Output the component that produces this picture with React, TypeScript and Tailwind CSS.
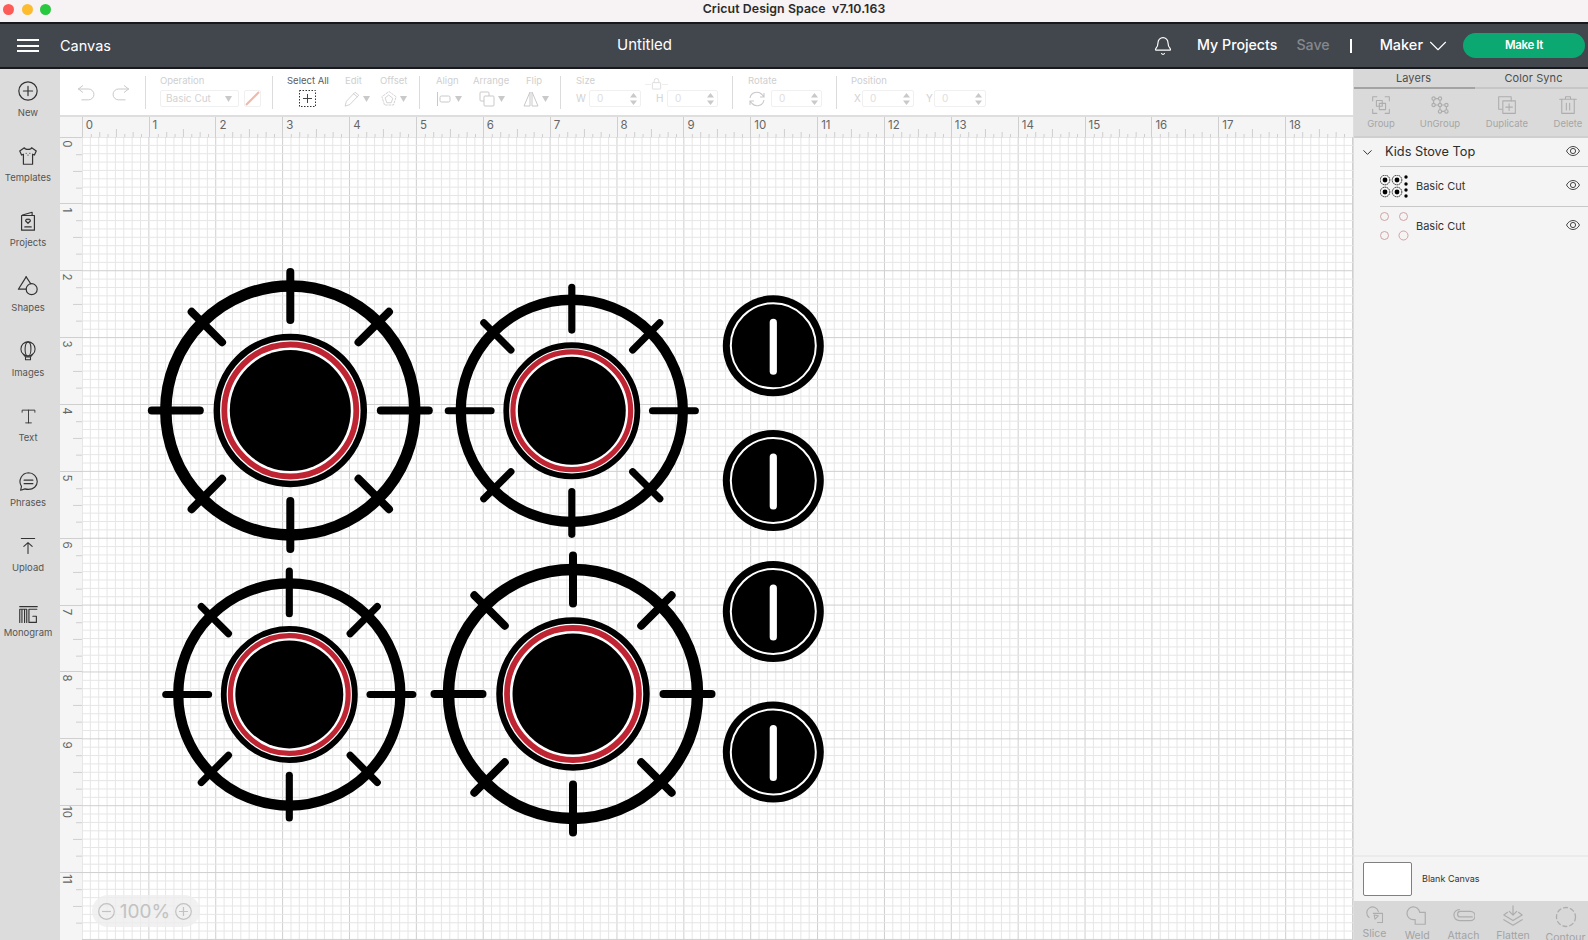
import React from "react";
import { Bell, ChevronDown } from "lucide-react";

const INCH = 66.87;
const GRID_X = 81.7;
const GRID_Y = 136.5;

function Ic({ children, size = 22, sw = 1.3 }: { children: React.ReactNode; size?: number; sw?: number }) {
  return (
    <svg
      width={size}
      height={size}
      viewBox="0 0 24 24"
      fill="none"
      stroke="currentColor"
      strokeWidth={sw}
      strokeLinecap="round"
      strokeLinejoin="round">
      {children}
    </svg>
  );
}

function Caret() {
  return (
    <svg width="7" height="6" viewBox="0 0 7 6">
      <path d="M0 0h7L3.5 6z" fill="#c9c9c9" />
    </svg>
  );
}

function Burner({ x, y, s }: { x: number; y: number; s: number }) {
  const diag = [45, 135, 225, 315];
  const straight = [0, 90, 180, 270];
  return (
    <g transform={`translate(${x} ${y}) scale(${s})`}>
      <circle r="124.5" fill="none" stroke="#000" strokeWidth="11.5" />
      {straight.map((a) => (
        <line key={a} x1="90.5" x2="138.5" transform={`rotate(${a})`} stroke="#000" strokeWidth="8" strokeLinecap="round" />
      ))}
      {diag.map((a) => (
        <line key={a} x1="96.5" x2="139.5" transform={`rotate(${a})`} stroke="#000" strokeWidth="8" strokeLinecap="round" />
      ))}
      <circle r="71" fill="#fff" />
      <circle r="73.5" fill="none" stroke="#000" strokeWidth="6.5" />
      <circle r="66" fill="none" stroke="#bf2433" strokeWidth="5.8" />
      <circle r="60.5" fill="#000" />
    </g>
  );
}

function Knob({ x, y }: { x: number; y: number }) {
  return (
    <g transform={`translate(${x} ${y})`}>
      <circle r="50.5" fill="#000" />
      <circle r="42.5" fill="none" stroke="#fff" strokeWidth="2" />
      <rect x="-3.6" y="-27" width="7.2" height="56" rx="3.6" fill="#fff" />
    </g>
  );
}

function CanvasArt() {
  const vertical = Array.from({ length: 153 }, (_, i) => i);
  const horizontal = Array.from({ length: 97 }, (_, i) => i);
  return (
    <svg width="1271.3" height="803.5" viewBox={`${GRID_X} ${GRID_Y} 1271.3 803.5`} className="block">
      {vertical.map((i) => (
        <line
          key={i}
          x1={GRID_X + (i * INCH) / 8}
          x2={GRID_X + (i * INCH) / 8}
          y1={GRID_Y}
          y2={940}
          stroke={i % 8 === 0 ? "#cfcfcf" : "#e6e6e6"}
          strokeWidth="1"
        />
      ))}
      {horizontal.map((i) => (
        <line
          key={i}
          x1={GRID_X}
          x2={1353}
          y1={GRID_Y + (i * INCH) / 8}
          y2={GRID_Y + (i * INCH) / 8}
          stroke={i % 8 === 0 ? "#cfcfcf" : "#e6e6e6"}
          strokeWidth="1"
        />
      ))}
      <Burner x={290} y={410} s={1} />
      <Burner x={571.5} y={410.3} s={0.892} />
      <Burner x={289} y={694} s={0.892} />
      <Burner x={572.7} y={693.5} s={1} />
      <Knob x={773} y={345.3} />
      <Knob x={773} y={480} />
      <Knob x={773} y={611} />
      <Knob x={773} y={751.5} />
    </svg>
  );
}

function TopRuler() {
  const ticks = [1, 2, 3, 4, 5, 6, 7];
  return (
    <div className="flex h-[19.5px] overflow-hidden bg-[#f5f5f5]">
      <div className="w-[21.7px] shrink-0" />
      {Array.from({ length: 19 }, (_, n) => (
        <div key={n} className="relative w-[66.87px] shrink-0 border-l border-[#cfcfcf]">
          <span className="absolute left-[3px] top-[1px] text-[11.5px] leading-[14px] text-[#666]">{n}</span>
          <svg width="67" height="8" className="absolute bottom-0 left-0">
            {ticks.map((t) => (
              <line
                key={t}
                x1={(t * INCH) / 8}
                x2={(t * INCH) / 8}
                y1={t === 4 ? 0 : t % 2 === 0 ? 3 : 5}
                y2="8"
                stroke="#cfcfcf"
              />
            ))}
          </svg>
        </div>
      ))}
    </div>
  );
}

function LeftRuler() {
  const ticks = [1, 2, 3];
  return (
    <div className="w-[21.7px] shrink-0 bg-[#f5f5f5]">
      {Array.from({ length: 12 }, (_, n) => (
        <div key={n} className="relative h-[66.87px] border-t border-[#cfcfcf]">
          <span className="absolute left-[1px] top-0 w-[12px] rotate-90 text-center text-[11.5px] leading-[12px] text-[#666]">
            {n}
          </span>
          <svg width="22" height="67" className="absolute left-0 top-0">
            {ticks.map((t) => (
              <line key={t} x1={t === 2 ? 13 : 16} x2="22" y1={(t * INCH) / 4} y2={(t * INCH) / 4} stroke="#cfcfcf" />
            ))}
          </svg>
        </div>
      ))}
    </div>
  );
}

function Sep() {
  return <div className="mt-[7px] h-[33px] w-px shrink-0 bg-[#dcdcdc]" />;
}

function Tool({
  label,
  className,
  labelClass,
  children
}: {
  label: string;
  className: string;
  labelClass?: string;
  children: React.ReactNode;
}) {
  return (
    <div className={`shrink-0 ${className}`}>
      <div className={`h-[20px] pt-[6px] text-[9.5px] leading-[12px] ${labelClass ?? "text-[#cfcfcf]"}`}>{label}</div>
      <div className="flex h-[19px] items-center">{children}</div>
    </div>
  );
}

function NumInput({ className }: { className: string }) {
  return (
    <div className={`flex h-[17px] items-center justify-between rounded-[2px] border border-[#f0f0f0] pl-[7px] pr-[3px] ${className}`}>
      <span className="text-[10px] text-[#dedede]">0</span>
      <svg width="7" height="12" viewBox="0 0 7 12">
        <path d="M3.5 0 7 4.5H0zM3.5 12 0 7.5h7z" fill="#c9c9c9" />
      </svg>
    </div>
  );
}

function Toolbar() {
  return (
    <div className="flex h-[48px] border-b-2 border-[#dedede] bg-white text-[#c9c9c9]">
      <div className="flex w-[85px] shrink-0 items-center gap-[15px] pl-[16px] pt-[4px]">
        <Ic size={20} sw={1.2}>
          <path d="M3 6l5-4M3 6l5 4M3 6h12a6 6 0 0 1 0 13H7" />
        </Ic>
        <Ic size={20} sw={1.2}>
          <path d="M21 6l-5-4M21 6l-5 4M21 6H9a6 6 0 0 0 0 13h8" />
        </Ic>
      </div>
      <Sep />
      <Tool label="Operation" className="w-[126px] pl-[14px]">
        <div className="flex h-[17px] w-[79px] items-center justify-between rounded-[2px] border border-[#f0f0f0] pl-[5px] pr-[6px]">
          <span className="text-[10px] text-[#d2d2d2]">Basic Cut</span>
          <Caret />
        </div>
        <div className="ml-[5px] flex h-[17px] w-[17px] items-center justify-center rounded-[2px] border border-[#f0f0f0]">
          <svg width="15" height="15" viewBox="0 0 15 15">
            <line x1="1" y1="14" x2="14" y2="1" stroke="#f0b8a8" strokeWidth="2" />
          </svg>
        </div>
      </Tool>
      <Sep />
      <Tool label="Select All" labelClass="text-[#5c5c5c]" className="w-[70px] pl-[14px]">
        <svg width="17" height="17" viewBox="0 0 17 17" fill="none" stroke="#333" className="ml-[12px]">
          <rect x="0.5" y="0.5" width="16" height="16" strokeDasharray="1.5 1.5" />
          <path d="M8.500 4v9M4 8.500h9" stroke="#444" />
        </svg>
      </Tool>
      <Tool label="Edit" className="w-[37px] pl-[2px]">
        <div className="-ml-[2px] flex items-center gap-[2px]">
          <Ic size={18} sw={1.1}>
            <path d="M3 21l1.5-6L16 3l5 4-11.5 12zM14 5l5 4" />
          </Ic>
          <Caret />
        </div>
      </Tool>
      <Tool label="Offset" className="w-[39px]">
        <div className="flex items-center gap-[2px]">
          <Ic size={18} sw={1.1}>
            <path d="M12 7l5 4-2 6H9l-2-6z" />
            <path d="M12 2l9.5 7-3.5 11H6L2.5 9z" strokeDasharray="2.5 2" />
          </Ic>
          <Caret />
        </div>
      </Tool>
      <Sep />
      <Tool label="Align" className="w-[53px] pl-[16px]">
        <div className="flex items-center gap-[3px]">
          <svg width="16" height="16" viewBox="0 0 16 16" fill="none" stroke="currentColor">
            <path d="M1.5 1v14" />
            <rect x="4" y="5" width="10" height="6" rx="1.5" />
          </svg>
          <Caret />
        </div>
      </Tool>
      <Tool label="Arrange" className="w-[50px]">
        <div className="ml-[6px] flex items-center gap-[3px]">
          <svg width="16" height="16" viewBox="0 0 16 16" fill="none" stroke="currentColor">
            <rect x="1" y="1" width="9" height="9" rx="1" />
            <rect x="5" y="5" width="10" height="10" rx="1" fill="#fff" />
          </svg>
          <Caret />
        </div>
      </Tool>
      <Tool label="Flip" className="w-[37px] pl-[3px]">
        <div className="-ml-[3px] flex items-center gap-[3px]">
          <svg width="16" height="18" viewBox="0 0 16 18" fill="none" stroke="currentColor">
            <path d="M7 2 1 16h6zM9 2l6 14H9z" />
          </svg>
          <Caret />
        </div>
      </Tool>
      <Sep />
      <Tool label="Size" className="relative w-[171px] pl-[15px]">
        <span className="absolute left-[84px] top-[9px] flex items-center">
          <span className="h-px w-[6px] bg-[#eeeeee]" />
          <svg width="11" height="12" viewBox="0 0 12 13" fill="none" stroke="#dcdcdc">
            <rect x="1.5" y="5" width="9" height="7" rx="0.5" />
            <path d="M3.5 5V3a2.5 2.5 0 0 1 5 0v2" />
          </svg>
          <span className="h-px w-[6px] bg-[#eeeeee]" />
        </span>
        <span className="w-[13px] text-[10px] text-[#d2d2d2]">W</span>
        <NumInput className="w-[52px]" />
        <span className="ml-[15px] w-[11px] text-[10px] text-[#d2d2d2]">H</span>
        <NumInput className="w-[51px]" />
      </Tool>
      <Sep />
      <Tool label="Rotate" className="w-[103px] pl-[15px]">
        <svg width="18" height="18" viewBox="0 0 18 18" fill="none" stroke="currentColor" strokeWidth="1.1">
          <path d="M2 8a7 7 0 0 1 12-3.5L16 7M16 3v4h-4M16 10a7 7 0 0 1-12 3.5L2 11M2 15v-4h4" />
        </svg>
        <NumInput className="ml-[5px] w-[51px]" />
      </Tool>
      <Sep />
      <Tool label="Position" className="pl-[14px]">
        <span className="w-[11px] pl-[3px] text-[10px] text-[#d2d2d2]">X</span>
        <NumInput className="w-[52px]" />
        <span className="ml-[12px] w-[8px] text-[10px] text-[#d2d2d2]">Y</span>
        <NumInput className="w-[52px]" />
      </Tool>
    </div>
  );
}

const sideItems: { label: string; icon: React.ReactNode }[] = [
  {
    label: "New",
    icon: (
      <Ic>
        <circle cx="12" cy="12" r="10" />
        <path d="M12 7v10M7 12h10" />
      </Ic>
    )
  },
  {
    label: "Templates",
    icon: (
      <Ic>
        <path d="M8 3 3 6.500 5 11 7 10v11h10V10l2 1 2-4.500L16 3c-.8 2.500-7.200 2.500-8 0z" />
        <path d="M10 9h.01M14 9h.01M12 11h.01" />
      </Ic>
    )
  },
  {
    label: "Projects",
    icon: (
      <Ic>
        <path d="M6 6v-.5L16.500 2.500V6M5 6h14v16H5z" />
        <path d="M12 14.500 9.500 12a1.500 1.500 0 0 1 2.500-1.500A1.500 1.500 0 0 1 14.500 12zM8.500 18.500h7" />
      </Ic>
    )
  },
  {
    label: "Shapes",
    icon: (
      <Ic>
        <path d="M10 2 1.500 15.500H10" />
        <path d="M10 2l5 7.500" />
        <circle cx="16" cy="15.500" r="6" />
      </Ic>
    )
  },
  {
    label: "Images",
    icon: (
      <Ic size={20}>
        <circle cx="12" cy="9.500" r="8.500" />
        <ellipse cx="12" cy="9.500" rx="3.500" ry="8.500" />
        <path d="M6.500 16 9 19h6l2.500-3M9 19v3.500h6V19" />
      </Ic>
    )
  },
  {
    label: "Text",
    icon: (
      <Ic size={17}>
        <path d="M3 6V3h18v3M12 3v18M8 21h8" />
      </Ic>
    )
  },
  {
    label: "Phrases",
    icon: (
      <Ic size={21}>
        <path d="M12 2a10 10 0 0 1 10 10c0 5.500-4.500 9-10 9-1.500 0-2.500 0-4-.6L3 22l1-4.500A10 10 0 0 1 12 2z" />
        <path d="M7 10.500h10M7 14.500h10" />
      </Ic>
    )
  },
  {
    label: "Upload",
    icon: (
      <Ic size={20}>
        <path d="M4 3h16M12 21V8M7 12.500 12 8l5 4.500" />
      </Ic>
    )
  },
  {
    label: "Monogram",
    icon: (
      <div className="translate-y-[3px]">
        <Ic size={21}>
          <path d="M2 3h20M2 21V6h8v15M4.500 6v15M7.500 6v15M12.500 6v15H21v-7h-4M13 6h8.500" />
        </Ic>
      </div>
    )
  }
];

function Sidebar() {
  return (
    <div className="w-[60px] shrink-0 bg-[#dcdcdc] pr-[4px] pt-[11px]">
      {sideItems.map((it) => (
        <div key={it.label} className="flex h-[65px] flex-col items-center text-[#333]">
          <div className="flex h-[22px] items-center justify-center">{it.icon}</div>
          <div className="mt-[5px] text-[9.5px] leading-[12px] text-[#555]">{it.label}</div>
        </div>
      ))}
    </div>
  );
}

function EyeMark() {
  return (
    <svg width="14" height="10" viewBox="0 0 14 10" fill="none" stroke="#333" strokeWidth="0.9" className="mb-[3px] mr-[8px]">
      <path d="M0.500 5C2 2 4.500 0.500 7 0.500S12 2 13.500 5C12 8 9.500 9.500 7 9.500S2 8 0.500 5z" />
      <circle cx="7" cy="5" r="2.600" />
    </svg>
  );
}

function Thumb() {
  const rings = [
    [5, 5],
    [17, 5],
    [5, 17],
    [17, 17]
  ];
  const dots = [2, 9, 15, 21];
  return (
    <svg width="29" height="24" viewBox="0 0 29 24">
      {rings.map(([x, y]) => (
        <g key={`${x}-${y}`}>
          <circle cx={x} cy={y} r="4.800" fill="none" stroke="#000" strokeWidth="0.8" strokeDasharray="1.500 0.500" />
          <circle cx={x} cy={y} r="2.400" fill="#000" />
        </g>
      ))}
      {dots.map((y) => (
        <circle key={y} cx="26" cy={y} r="1.700" fill="#000" />
      ))}
    </svg>
  );
}

function RedDots() {
  return (
    <svg width="29" height="29" viewBox="0 0 29 29" fill="none" stroke="#c98f8f" strokeWidth="0.8">
      <circle cx="4.500" cy="4.500" r="4" />
      <circle cx="23.500" cy="4.500" r="4" />
      <circle cx="4.500" cy="23.500" r="4" />
      <circle cx="23.500" cy="23.500" r="4.500" />
    </svg>
  );
}

const panelTools: { label: string; w: string; icon: React.ReactNode }[] = [
  {
    label: "Group",
    w: "w-[54px]",
    icon: (
      <Ic size={20}>
        <path d="M2 7V2h5M17 2h5v5M2 17v5h5M22 17v5h-5" />
        <rect x="6.500" y="6.500" width="7" height="7" />
        <rect x="10" y="10" width="7.500" height="7.500" />
      </Ic>
    )
  },
  {
    label: "UnGroup",
    w: "w-[64px]",
    icon: (
      <Ic size={22}>
        <path d="M5 5h7v7H5zM12 12h7v7h-7z" />
        <circle cx="5" cy="5" r="1.800" fill="#dadada" />
        <circle cx="12" cy="5" r="1.800" fill="#dadada" />
        <circle cx="5" cy="12" r="1.800" fill="#dadada" />
        <circle cx="12" cy="12" r="1.800" fill="#dadada" />
        <circle cx="19" cy="12" r="1.800" fill="#dadada" />
        <circle cx="12" cy="19" r="1.800" fill="#dadada" />
        <circle cx="19" cy="19" r="1.800" fill="#dadada" />
      </Ic>
    )
  },
  {
    label: "Duplicate",
    w: "w-[70px]",
    icon: (
      <Ic size={20}>
        <path d="M6 17H2V2h15v5" />
        <rect x="7" y="7" width="15" height="15" />
        <path d="M14.500 10.500v8M10.500 14.500h8" />
      </Ic>
    )
  },
  {
    label: "Delete",
    w: "w-[52px]",
    icon: (
      <Ic size={20}>
        <path d="M2 5h20M9 5V2h6v3M4.500 5v17h15V5M10 10v8M14 10v8" />
      </Ic>
    )
  }
];

const bottomTools: { label: string; w: string; icon: React.ReactNode }[] = [
  {
    label: "Slice",
    w: "w-[41px]",
    icon: (
      <Ic size={20}>
        <path d="M5 15a7 7 0 1 1 11-7" />
        <path d="M10 10h11v11h-6" />
        <path d="M11 12l5 1-4 4z" />
      </Ic>
    )
  },
  {
    label: "Weld",
    w: "w-[44.500px]",
    icon: (
      <Ic size={22}>
        <path d="M10 16H8A7 7 0 1 1 15 8h6v13H10z" />
      </Ic>
    )
  },
  {
    label: "Attach",
    w: "w-[48px]",
    icon: (
      <Ic size={22}>
        <path d="M21 13H8a3 3 0 0 1 0-6h11a4.500 4.500 0 0 1 0 10H7a6 6 0 0 1 0-12" />
      </Ic>
    )
  },
  {
    label: "Flatten",
    w: "w-[51px]",
    icon: (
      <Ic size={22}>
        <path d="M12 1v9M8 7l4 4 4-4M6 8 2 11l10 6 10-6-4-3M2 16l10 6 10-6" />
      </Ic>
    )
  },
  {
    label: "Contour",
    w: "w-[54px]",
    icon: (
      <Ic size={24}>
        <circle cx="12" cy="12" r="9.500" strokeDasharray="4 3" />
      </Ic>
    )
  }
];

function Panel() {
  return (
    <div className="flex w-[235px] shrink-0 flex-col border-l border-[#dedede] bg-[#f4f4f4]">
      <div className="flex h-[20px] bg-[#d8d8d8] text-[11px] leading-[18px] tracking-[0.1px] text-[#4d4d4d]">
        <div className="w-[121px] border-b-2 border-[#a3a3a3] pr-[2px] text-center">Layers</div>
        <div className="flex-1 border-b-2 border-[#c6c6c6] pl-[4px] text-center">Color Sync</div>
      </div>
      <div className="flex h-[49px] border-b-2 border-[#cfcfcf] bg-[#dadada] text-[#adadad]">
        {panelTools.map((t) => (
          <div key={t.label} className={`flex shrink-0 flex-col items-center pt-[5px] ${t.w}`}>
            <div className="flex h-[22px] items-center">{t.icon}</div>
            <div className="mt-[2px] text-[9.5px] leading-[12px] text-[#a6a6a6]">{t.label}</div>
          </div>
        ))}
      </div>
      <div className="flex-1">
        <div className="flex h-[28px] items-center">
          <ChevronDown size={15} strokeWidth={1.5} className="ml-[6px] text-[#222]" />
          <span className="ml-[10px] flex-1 text-[12.75px] text-[#2c2c2c]">Kids Stove Top</span>
          <EyeMark />
        </div>
        <div className="ml-[26px] flex h-[40px] items-center border-t border-[#c8c8c8]">
          <Thumb />
          <span className="ml-[7px] flex-1 text-[11px] text-[#333]">Basic Cut</span>
          <EyeMark />
        </div>
        <div className="ml-[26px] flex h-[40px] items-center border-t border-[#c8c8c8]">
          <RedDots />
          <span className="ml-[7px] flex-1 text-[11px] text-[#333]">Basic Cut</span>
          <EyeMark />
        </div>
      </div>
      <div className="flex h-[46px] items-center border-t-2 border-[#ebebeb] pl-[9px]">
        <div className="h-[34px] w-[49px] rounded-[2px] border border-[#808080] bg-white" />
        <span className="ml-[10px] text-[9px] text-[#333]">Blank Canvas</span>
      </div>
      <div className="flex h-[39px] overflow-hidden bg-[#d8d8d8] text-[#adadad]">
        {bottomTools.map((t) => (
          <div key={t.label} className={`flex shrink-0 flex-col items-center pt-[4px] ${t.w}`}>
            <div className="flex h-[24px] items-center">{t.icon}</div>
            <div className="pt-[2px] text-[10.5px] leading-[14px] text-[#a3a3a3]">{t.label}</div>
          </div>
        ))}
      </div>
    </div>
  );
}

export default function App() {
  return (
    <div className="flex h-[940px] w-[1588px] flex-col overflow-hidden bg-white [font-family:Inter,sans-serif]">
      <div className="grid h-[22px] shrink-0 grid-cols-[1fr_auto_1fr] items-center bg-[#f7f2f3] pb-[3px]">
        <div className="flex gap-[7.500px] pl-[3px]">
          <span className="h-[11px] w-[11px] rounded-full bg-[#fc5b57]" />
          <span className="h-[11px] w-[11px] rounded-full bg-[#fdbc2e]" />
          <span className="h-[11px] w-[11px] rounded-full bg-[#28c83f]" />
        </div>
        <div className="text-[12.3px] font-semibold tracking-[0.1px] text-[#2b2b2b]">Cricut Design Space&nbsp; v7.10.163</div>
        <div />
      </div>

      <div className="grid h-[47px] shrink-0 grid-cols-[617px_1fr_auto] items-center border-y-2 border-[#17191d] bg-[#42464d] text-white">
        <div className="flex items-center">
          <div className="ml-[17px] flex w-[22px] flex-col gap-[3.500px]">
            <span className="h-[2px] bg-white" />
            <span className="h-[2px] bg-white" />
            <span className="h-[2px] bg-white" />
          </div>
          <span className="ml-[21px] text-[14.5px]">Canvas</span>
        </div>
        <span className="text-[15px]">Untitled</span>
        <div className="flex items-center">
          <Bell size={20} strokeWidth={1.4} />
          <span className="mb-[2px] ml-[24px] text-[14.2px] font-medium">My Projects</span>
          <span className="mb-[2px] ml-[19px] text-[14.2px] font-medium text-[#85888d]">Save</span>
          <span className="ml-[20px] h-[14px] w-[2px] bg-white" />
          <span className="mb-[2px] ml-[28px] text-[14.5px] font-medium">Maker</span>
          <ChevronDown size={30} strokeWidth={0.9} />
          <div className="ml-[10px] mr-[3px] flex h-[25px] w-[122px] items-center justify-center rounded-full bg-[#0ba872] text-[11.5px] font-semibold tracking-[-0.4px]">
            Make It
          </div>
        </div>
      </div>

      <div className="flex h-[871px] shrink-0">
        <Sidebar />
        <div className="flex w-[1293px] shrink-0 flex-col">
          <Toolbar />
          <TopRuler />
          <div className="flex h-[803.500px] overflow-hidden">
            <LeftRuler />
            <div className="relative flex-1 overflow-hidden">
              <CanvasArt />
              <div className="absolute bottom-[13px] left-[10px] flex h-[32px] w-[108px] items-center gap-[5px] rounded-full bg-[#eeeeee]/80 pl-[6px] text-[#c2c2c2]">
                <svg width="17" height="17" viewBox="0 0 17 17" fill="none" stroke="currentColor" strokeWidth="1.2">
                  <circle cx="8.500" cy="8.500" r="7.800" />
                  <path d="M4 8.500h9" />
                </svg>
                <span className="text-[19px] leading-none">100%</span>
                <svg width="17" height="17" viewBox="0 0 17 17" fill="none" stroke="currentColor" strokeWidth="1.2">
                  <circle cx="8.500" cy="8.500" r="7.800" />
                  <path d="M4 8.500h9M8.500 4v9" />
                </svg>
              </div>
            </div>
          </div>
        </div>
        <Panel />
      </div>
    </div>
  );
}
